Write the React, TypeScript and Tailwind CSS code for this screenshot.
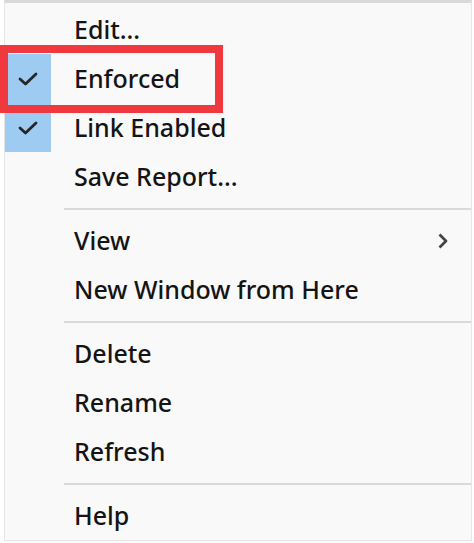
import React from "react";

type Item = { label: string; checked?: boolean; sub?: boolean } | "sep";

const items: Item[] = [
  { label: "Edit..." },
  { label: "Enforced", checked: true },
  { label: "Link Enabled", checked: true },
  { label: "Save Report..." },
  "sep",
  { label: "View", sub: true },
  { label: "New Window from Here" },
  "sep",
  { label: "Delete" },
  { label: "Rename" },
  { label: "Refresh" },
  "sep",
  { label: "Help" },
];

const Check = () => (
  <svg width="22" height="16" viewBox="0 0 22 16" fill="none">
    <path d="M3 8 L8.5 13 L19 3" stroke="#262626" strokeWidth="2.8" strokeLinecap="round" strokeLinejoin="round" />
  </svg>
);

const Chevron = () => (
  <svg width="12" height="18" viewBox="0 0 12 18" fill="none">
    <path d="M2.5 2.5 L9 9 L2.5 15.5" stroke="#444" strokeWidth="2.8" strokeLinejoin="round" />
  </svg>
);

export default function App() {
  return (
    <div className="relative w-[474px] h-[543px] bg-white font-['Noto_Sans',sans-serif]">
      <div className="ml-[4px] w-[468px] bg-[#f9f9f9] border border-[#e6e6e6] border-t-[3px] border-t-[#d9d9d9] pt-[2px]">
        {items.map((it, i) =>
          it === "sep" ? (
            <div key={i} className="h-[15px] flex items-center">
              <div className="ml-[59px] flex-1 h-[2px] bg-[#dadada]" />
            </div>
          ) : (
            <div key={i} className="h-[49px] flex items-center">
              <div
                className={
                  "w-[46px] h-full flex items-center justify-center " +
                  (it.checked ? "bg-[#9dcbf2]" : "")
                }
              >
                {it.checked && <Check />}
              </div>
              <span className="ml-[23px] text-[25px] font-medium text-[#141414] leading-none">{it.label}</span>
              {it.sub && (
                <span className="ml-auto mr-[22px] flex">
                  <Chevron />
                </span>
              )}
            </div>
          )
        )}
      </div>
      <div className="absolute left-0 top-[45px] w-[223px] h-[68px] border-[8px] border-[#f0393f]" />
    </div>
  );
}
